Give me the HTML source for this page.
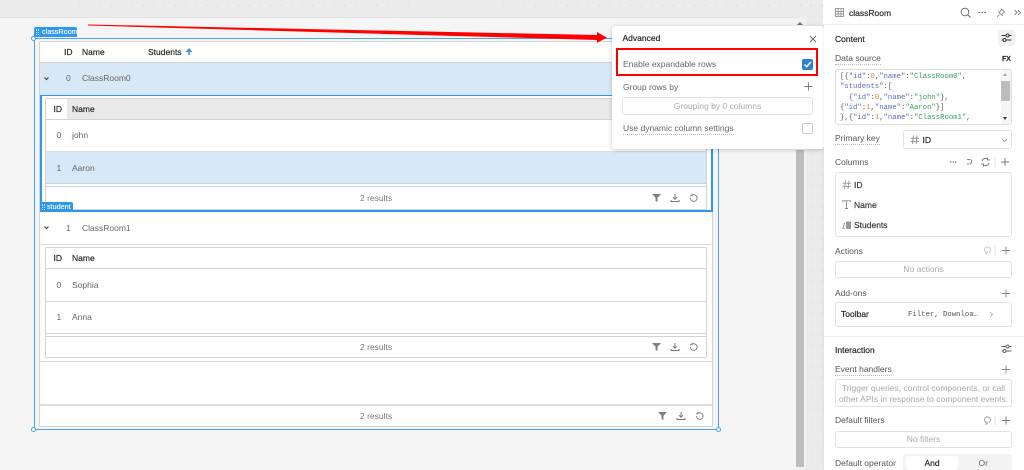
<!DOCTYPE html>
<html><head><meta charset="utf-8">
<style>
*{box-sizing:border-box}
html,body{margin:0;padding:0}
body{width:1024px;height:470px;overflow:hidden;position:relative;background:#ebebeb;font-family:"Liberation Sans",sans-serif;font-size:8.5px;color:#555;filter:blur(.25px)}
.a{position:absolute}
.t{position:absolute;white-space:nowrap;line-height:12px}
.b{color:#2a2a2a;font-weight:400;-webkit-text-stroke:.2px #2a2a2a}
.g{color:#666}
.l{color:#aaa}
.hl{position:absolute;background:#d3d3d3;height:1px}
.pl{position:absolute;font-size:8.5px;color:#555;white-space:nowrap;line-height:12px}
.box{position:absolute;background:#fff;border:1px solid #e2e2e2;border-radius:3px}
svg{position:absolute;overflow:visible}
.code{font-family:"Liberation Mono",monospace;font-size:7.25px;line-height:10.3px;white-space:pre;position:absolute;left:840px;top:72px;color:#555}
.k{color:#5b6bc0}.s{color:#3aa05a}.n{color:#e08a4a}
</style></head><body>
<!-- dots -->
<svg width="1024" height="470" style="left:0;top:0">
<defs><pattern id="d" width="10.6" height="10.6" patternUnits="userSpaceOnUse"><rect x="5" y="5" width="1" height="1" fill="#d2d2d2"/></pattern></defs>
<rect x="0" y="0" width="825" height="16" fill="url(#d)"/>
<rect x="806" y="0" width="18" height="470" fill="url(#d)"/>
</svg>
<!-- canvas -->
<div class="a" style="left:0;top:17px;width:796px;height:453px;background:#f5f5f5;border-top:1px solid #e2e2e2"></div>
<div class="a" style="left:796px;top:17px;width:10px;height:453px;background:#f1f1f1"></div>
<div class="a" style="left:796px;top:150px;width:8px;height:317px;background:#bdbdbd"></div>
<div class="a" style="left:797px;top:22px;width:0;height:0;border-left:3px solid transparent;border-right:3px solid transparent;border-bottom:3px solid #777"></div>

<!-- outer selection -->
<div class="a" style="left:33.5px;top:38px;width:685px;height:392px;border:1px solid #4ea3ee"></div>
<div class="a" style="left:34px;top:27px;width:43px;height:10px;background:#2e97ee;border-radius:2px 2px 0 0"></div>
<div class="t" style="left:42px;top:26px;color:#fff;font-size:7.2px;-webkit-text-stroke:.1px #fff">classRoom</div>
<div class="a" style="left:36px;top:29px;width:3px;height:6px;border-left:1px dotted #bfe0fa;border-right:1px dotted #bfe0fa"></div>
<div class="a" style="left:31px;top:36px;width:5px;height:5px;border:1px solid #4ea3ee;border-radius:50%;background:#fff"></div>
<div class="a" style="left:716px;top:36px;width:5px;height:5px;border:1px solid #4ea3ee;border-radius:50%;background:#fff"></div>
<div class="a" style="left:31px;top:427px;width:5px;height:5px;border:1px solid #4ea3ee;border-radius:50%;background:#fff"></div>
<div class="a" style="left:716px;top:427px;width:5px;height:5px;border:1px solid #4ea3ee;border-radius:50%;background:#fff"></div>

<!-- outer table -->
<div class="a" style="left:39px;top:41px;width:674px;height:386px;background:#fff;border:1px solid #d3d3d3;border-radius:2px"></div>
<div class="t b" style="left:64px;top:46px">ID</div>
<div class="t b" style="left:82px;top:46px">Name</div>
<div class="t b" style="left:148px;top:46px">Students</div>
<svg width="8" height="8" style="left:185px;top:48px"><path d="M4 7V1.500M1.500 4L4 1.200 6.500 4" fill="none" stroke="#2e8fe0" stroke-width="1.500"/></svg>
<div class="hl" style="left:40px;top:62px;width:672px"></div>
<div class="a" style="left:40px;top:63px;width:672px;height:32px;background:#d7e8f7"></div>
<svg width="8" height="6" style="left:42.500px;top:76px"><path d="M1.500 1.500L3.500 3.500 5.500 1.500" fill="none" stroke="#444" stroke-width="1.200"/></svg>
<div class="t g" style="left:66px;top:72px">0</div>
<div class="t g" style="left:82px;top:72px">ClassRoom0</div>

<!-- nested 1 -->
<div class="a" style="left:45px;top:98px;width:662px;height:112px;background:#fff;border:1px solid #d3d3d3;border-radius:2px"></div>
<div class="a" style="left:67px;top:99px;width:639px;height:20px;background:#e9e9e9"></div>
<div class="hl" style="left:46px;top:119px;width:660px"></div>
<div class="t b" style="left:53.500px;top:103px">ID</div>
<div class="t b" style="left:72px;top:103px">Name</div>
<div class="t g" style="left:56.500px;top:129px">0</div>
<div class="t g" style="left:72px;top:129px">john</div>
<div class="hl" style="left:46px;top:151px;width:660px;background:#dcdcdc"></div>
<div class="a" style="left:46px;top:152px;width:660px;height:31px;background:#d7e8f7"></div>
<div class="t g" style="left:56.500px;top:162px">1</div>
<div class="t g" style="left:72px;top:162px">Aaron</div>
<div class="hl" style="left:46px;top:183px;width:660px"></div>
<div class="hl" style="left:46px;top:186px;width:660px"></div>
<div class="t g" style="left:360px;top:192px;color:#777">2 results</div>
<!-- nested selection -->
<div class="a" style="left:40px;top:95px;width:673px;height:117px;border:2px solid #2e97ee;border-top-width:1.500px"></div>
<div class="a" style="left:40px;top:202px;width:33px;height:9px;background:#2e97ee;border-radius:2px 2px 0 0"></div>
<div class="t" style="left:47px;top:200.500px;color:#fff;font-size:7.200px;-webkit-text-stroke:.1px #fff">student</div>
<div class="a" style="left:42px;top:204px;width:3px;height:6px;border-left:1px dotted #bfe0fa;border-right:1px dotted #bfe0fa"></div>

<!-- row 1 -->
<svg width="8" height="6" style="left:42.500px;top:225px"><path d="M1.500 1.500L3.500 3.500 5.500 1.500" fill="none" stroke="#444" stroke-width="1.200"/></svg>
<div class="t g" style="left:66px;top:222px">1</div>
<div class="t g" style="left:82px;top:222px">ClassRoom1</div>
<div class="hl" style="left:40px;top:244px;width:672px;background:#dcdcdc"></div>

<!-- nested 2 -->
<div class="a" style="left:45px;top:247px;width:662px;height:111px;background:#fff;border:1px solid #d3d3d3;border-radius:2px"></div>
<div class="t b" style="left:53.500px;top:252px">ID</div>
<div class="t b" style="left:72px;top:252px">Name</div>
<div class="hl" style="left:46px;top:268px;width:660px"></div>
<div class="t g" style="left:56.500px;top:279px">0</div>
<div class="t g" style="left:72px;top:279px">Sophia</div>
<div class="hl" style="left:46px;top:300.500px;width:660px;height:1.500px;background:#dcdcdc"></div>
<div class="t g" style="left:56.500px;top:311px">1</div>
<div class="t g" style="left:72px;top:311px">Anna</div>
<div class="hl" style="left:46px;top:333px;width:660px"></div>
<div class="hl" style="left:46px;top:336px;width:660px"></div>
<div class="t g" style="left:360px;top:341px;color:#777">2 results</div>
<div class="hl" style="left:40px;top:361px;width:672px;background:#dcdcdc"></div>
<div class="hl" style="left:40px;top:404px;width:672px;height:1.500px;background:#dcdcdc"></div>
<div class="t g" style="left:360px;top:410px;color:#777">2 results</div>

<!-- toolbars -->
<svg width="1024" height="470" style="left:0;top:0">
<defs><g id="tb">
<path d="M0 0H9L5.500 3.800V8L3.500 7V3.800Z" fill="#808080"/>
<path d="M23 0V5M21 3.200L23 5.200 25 3.200M19 6V7.500H27V6" fill="none" stroke="#777" stroke-width="1"/>
<path d="M39.700 1.500A3.300 3.300 0 1 1 38.500 4M40 -.2V1.800H38" fill="none" stroke="#777" stroke-width=".9"/>
</g></defs>
<use href="#tb" x="652" y="194"/>
<use href="#tb" x="652" y="343"/>
<use href="#tb" x="658" y="412"/>
</svg>

<!-- arrow -->
<svg width="700" height="60" style="left:0;top:0">
<path d="M88 24.500L597 35 597 32 607 37.700 597 42.700 597 40 88 25.500Z" fill="#f00"/>
</svg>

<!-- popup -->
<div class="a" style="left:612px;top:26px;width:212px;height:123px;background:#fff;border-radius:3px;box-shadow:0 1px 5px rgba(0,0,0,.2)"></div>
<div class="t b" style="left:622.500px;top:31.500px">Advanced</div>
<svg width="8" height="8" style="left:808.500px;top:34.500px"><path d="M1 1L7 7M7 1L1 7" stroke="#666" stroke-width=".9"/></svg>
<div class="a" style="left:615.500px;top:47.500px;width:202px;height:28px;border:2px solid #f00"></div>
<div class="t g" style="left:623px;top:58px">Enable expandable rows</div>
<div class="a" style="left:802px;top:59px;width:11px;height:11px;background:#2e7fd0;border-radius:2px"></div>
<svg width="11" height="11" style="left:802px;top:59px"><path d="M2.500 5.500L4.700 7.800 8.800 3" fill="none" stroke="#fff" stroke-width="1.500"/></svg>
<div class="t g" style="left:623px;top:80.500px">Group rows by</div>
<svg width="9" height="9" style="left:803.500px;top:82px"><path d="M4.500 .5V8.500M.5 4.500H8.500" stroke="#777" stroke-width=".9"/></svg>
<div class="box" style="left:622px;top:97px;width:191px;height:18px;text-align:center;line-height:16px;color:#aaa">Grouping by 0 columns</div>
<div class="t g" style="left:623px;top:123px;border-bottom:1px dotted #bbb;line-height:11px">Use dynamic column settings</div>
<div class="a" style="left:802px;top:123px;width:11px;height:11px;border:1px solid #ccc;border-radius:2px;background:#fff"></div>

<!-- right panel -->
<div class="a" style="left:824px;top:25px;width:200px;height:445px;background:#fff;box-shadow:-1px 0 2px rgba(0,0,0,.05)"></div>
<div class="a" style="left:823px;top:0;width:201px;height:25px;background:#fff;border-bottom:1px solid #eee"></div>
<svg width="10" height="10" style="left:834.500px;top:7.500px"><path d="M.5 .5H8.500V8.500H.5ZM.5 3.500H8.500M.5 6H8.500M3.200 .5V8.500M6 .5V8.500" fill="none" stroke="#888" stroke-width=".8"/></svg>
<div class="t b" style="left:849px;top:6.500px">classRoom</div>
<svg width="70" height="12" style="left:960px;top:7px"><circle cx="5" cy="5" r="3.800" fill="none" stroke="#666" stroke-width=".9"/><path d="M8 8L10.500 10.500" stroke="#666" stroke-width=".9"/>
<path d="M18.500 5.500h1.500M21.500 5.500h1.500M24.500 5.500h1.500" stroke="#666" stroke-width="1"/>
<path d="M37 10L39.500 7.500M38 4.500L43 9M39.500 5.500L41.500 2 44.500 5 41.500 7.500" fill="none" stroke="#777" stroke-width=".8"/>
<path d="M54.500 3L57 5.500 54.500 8M58 3L60.500 5.500 58 8" fill="none" stroke="#666" stroke-width=".8"/></svg>

<div class="t b" style="left:835px;top:33px">Content</div>
<div class="a" style="left:998px;top:30px;width:17px;height:16px;background:#f1f1f1;border-radius:3px"></div>
<svg width="11" height="10" style="left:1001px;top:33px"><path d="M.5 2.500H10.500M.5 7H10.500" stroke="#333" stroke-width=".9"/><circle cx="6.500" cy="2.500" r="1.500" fill="#f1f1f1" stroke="#333" stroke-width=".9"/><circle cx="3.500" cy="7" r="1.500" fill="#f1f1f1" stroke="#333" stroke-width=".9"/></svg>
<div class="pl" style="left:835px;top:53px;border-bottom:1px dotted #bbb;line-height:11px">Data source</div>
<div class="t b" style="left:1002px;top:54px;font-size:7px;font-weight:700">FX</div>
<div class="a" style="left:835px;top:69px;width:177px;height:56px;border:1px solid #dedede;border-radius:3px;background:#fff"></div>
<div class="code"><span>[{</span><span class="k">"id"</span>:<span class="n">0</span>,<span class="k">"name"</span>:<span class="s">"ClassRoom0"</span>,
<span class="k">"students"</span>:[
  {<span class="k">"id"</span>:<span class="n">0</span>,<span class="k">"name"</span>:<span class="s">"john"</span>},
{<span class="k">"id"</span>:<span class="n">1</span>,<span class="k">"name"</span>:<span class="s">"Aaron"</span>}]
},{<span class="k">"id"</span>:<span class="n">1</span>,<span class="k">"name"</span>:<span class="s">"ClassRoom1"</span>,</div>
<div class="a" style="left:1001px;top:70px;width:10px;height:54px;background:#f6f6f6"></div>
<div class="a" style="left:1001px;top:81px;width:9px;height:20px;background:#bdbdbd"></div>
<div class="a" style="left:1003px;top:73px;border-left:2.500px solid transparent;border-right:2.500px solid transparent;border-bottom:3px solid #aaa"></div>
<div class="a" style="left:1003px;top:117px;border-left:2.500px solid transparent;border-right:2.500px solid transparent;border-top:3px solid #333"></div>
<div class="pl" style="left:835px;top:133px;border-bottom:1px dotted #bbb;line-height:11px">Primary key</div>
<div class="box" style="left:903px;top:130px;width:109px;height:19px"></div>
<svg width="10" height="10" style="left:910px;top:135px"><path d="M3.500 .5L2.500 9M7 .5L6 9M.5 3.200H9M.5 6.300H9" stroke="#888" stroke-width=".9"/></svg>
<div class="t b" style="left:922.500px;top:133.500px">ID</div>
<svg width="7" height="5" style="left:1000.500px;top:138px"><path d="M1 1L3.500 3.500 6 1" fill="none" stroke="#888" stroke-width=".8"/></svg>

<div class="pl" style="left:835px;top:156px">Columns</div>
<svg width="60" height="12" style="left:948px;top:156px"><path d="M2 6h1.500M4.500 6h1.500M7 6h1.500" stroke="#666" stroke-width="1"/>
<path d="M19 3.500h2.500a2 2 0 0 1 0 4.500M19 8h2" fill="none" stroke="#666" stroke-width=".8"/>
<path d="M34 5a3.500 3.500 0 0 1 6-1.500M41 7a3.500 3.500 0 0 1-6 1.500M39.500 1.500V4H42M35.500 10.500V8H33" fill="none" stroke="#666" stroke-width=".8"/>
<path d="M47 1V11" stroke="#e2e2e2"/><path d="M57.500 2V10M53.500 6H61.500" stroke="#777" stroke-width=".9" transform="translate(-.5 0)"/></svg>
<div class="box" style="left:835px;top:172px;width:177px;height:65px"></div>
<svg width="10" height="10" style="left:842px;top:180px"><path d="M3.500 .5L2.500 9M7 .5L6 9M.5 3.200H9M.5 6.300H9" stroke="#999" stroke-width=".9"/></svg>
<div class="t b" style="left:854px;top:179px;color:#444">ID</div>
<svg width="10" height="10" style="left:842px;top:200px"><path d="M.5 2V.8H8.500V2M4.500 .8V8.500M3 8.500H6" fill="none" stroke="#888" stroke-width=".9"/></svg>
<div class="t b" style="left:854px;top:199px;color:#444">Name</div>
<svg width="10" height="10" style="left:842px;top:220px"><rect x="4" y="1.500" width="5" height="7.500" rx="1" fill="#999"/><path d="M2.500 3L1 8.500H2.800" fill="none" stroke="#999"/></svg>
<div class="t b" style="left:854px;top:219px;color:#444">Students</div>

<div class="pl" style="left:835px;top:244.500px">Actions</div>
<svg width="30" height="12" style="left:982px;top:245px"><path d="M4 7.500a3 3 0 1 1 3 0M5 6v3H3" fill="none" stroke="#bbb" stroke-width=".8"/><path d="M13 .5V10.500" stroke="#e2e2e2"/><path d="M24 1.500V9.500M20 5.500H28" stroke="#888" stroke-width=".9"/></svg>
<div class="box" style="left:835px;top:261px;width:177px;height:17px;text-align:center;line-height:15px;color:#aaa">No actions</div>
<div class="pl" style="left:835px;top:287px">Add-ons</div>
<svg width="9" height="9" style="left:1002px;top:288.500px"><path d="M4 .5V8.500M0 4.500H8" stroke="#888" stroke-width=".9"/></svg>
<div class="box" style="left:835px;top:302px;width:177px;height:25px"></div>
<div class="t b" style="left:841px;top:308px">Toolbar</div>
<div class="t" style="left:908px;top:308.500px;font-family:'Liberation Mono',monospace;font-size:7.300px;color:#555">Filter, Downloa…</div>
<svg width="5" height="7" style="left:988.500px;top:310.500px"><path d="M1 1L3.500 3.500 1 6" fill="none" stroke="#aaa" stroke-width=".8"/></svg>
<div class="a" style="left:824px;top:336px;width:200px;height:1px;background:#eee"></div>

<div class="t b" style="left:835px;top:343.500px">Interaction</div>
<svg width="11" height="10" style="left:1001px;top:344px"><path d="M.5 2.500H10.500M.5 7H10.500" stroke="#666" stroke-width=".9"/><circle cx="6.500" cy="2.500" r="1.500" fill="#fff" stroke="#666" stroke-width=".9"/><circle cx="3.500" cy="7" r="1.500" fill="#fff" stroke="#666" stroke-width=".9"/></svg>
<div class="pl" style="left:835px;top:364px;border-bottom:1px dotted #bbb;line-height:11px">Event handlers</div>
<svg width="9" height="9" style="left:1002px;top:365px"><path d="M4 .5V8.500M0 4.500H8" stroke="#888" stroke-width=".9"/></svg>
<div class="box" style="left:835px;top:379px;width:177px;height:28px;text-align:center;line-height:10.500px;color:#aaa;font-size:8.500px;padding-top:3px;white-space:nowrap">Trigger queries, control components, or call<br>other APIs in response to component events.</div>
<div class="pl" style="left:835px;top:414px">Default filters</div>
<svg width="30" height="12" style="left:982px;top:415px"><path d="M4 7.500a3 3 0 1 1 3 0M5 6v3H3" fill="none" stroke="#888" stroke-width=".8"/><path d="M13 .5V10.500" stroke="#e2e2e2"/><path d="M24 1.500V9.500M20 5.500H28" stroke="#777" stroke-width=".9"/></svg>
<div class="box" style="left:835px;top:431px;width:177px;height:17px;text-align:center;line-height:15px;color:#aaa">No filters</div>
<div class="pl" style="left:835px;top:457px">Default operator</div>
<div class="a" style="left:903px;top:454px;width:109px;height:16px;background:#f3f3f3;border-radius:3px 3px 0 0"></div>
<div class="a" style="left:906px;top:456px;width:52px;height:14px;background:#fff;border-radius:3px"></div>
<div class="t b" style="left:924.500px;top:457px">And</div>
<div class="t g" style="left:978.500px;top:457px">Or</div>
</body></html>
